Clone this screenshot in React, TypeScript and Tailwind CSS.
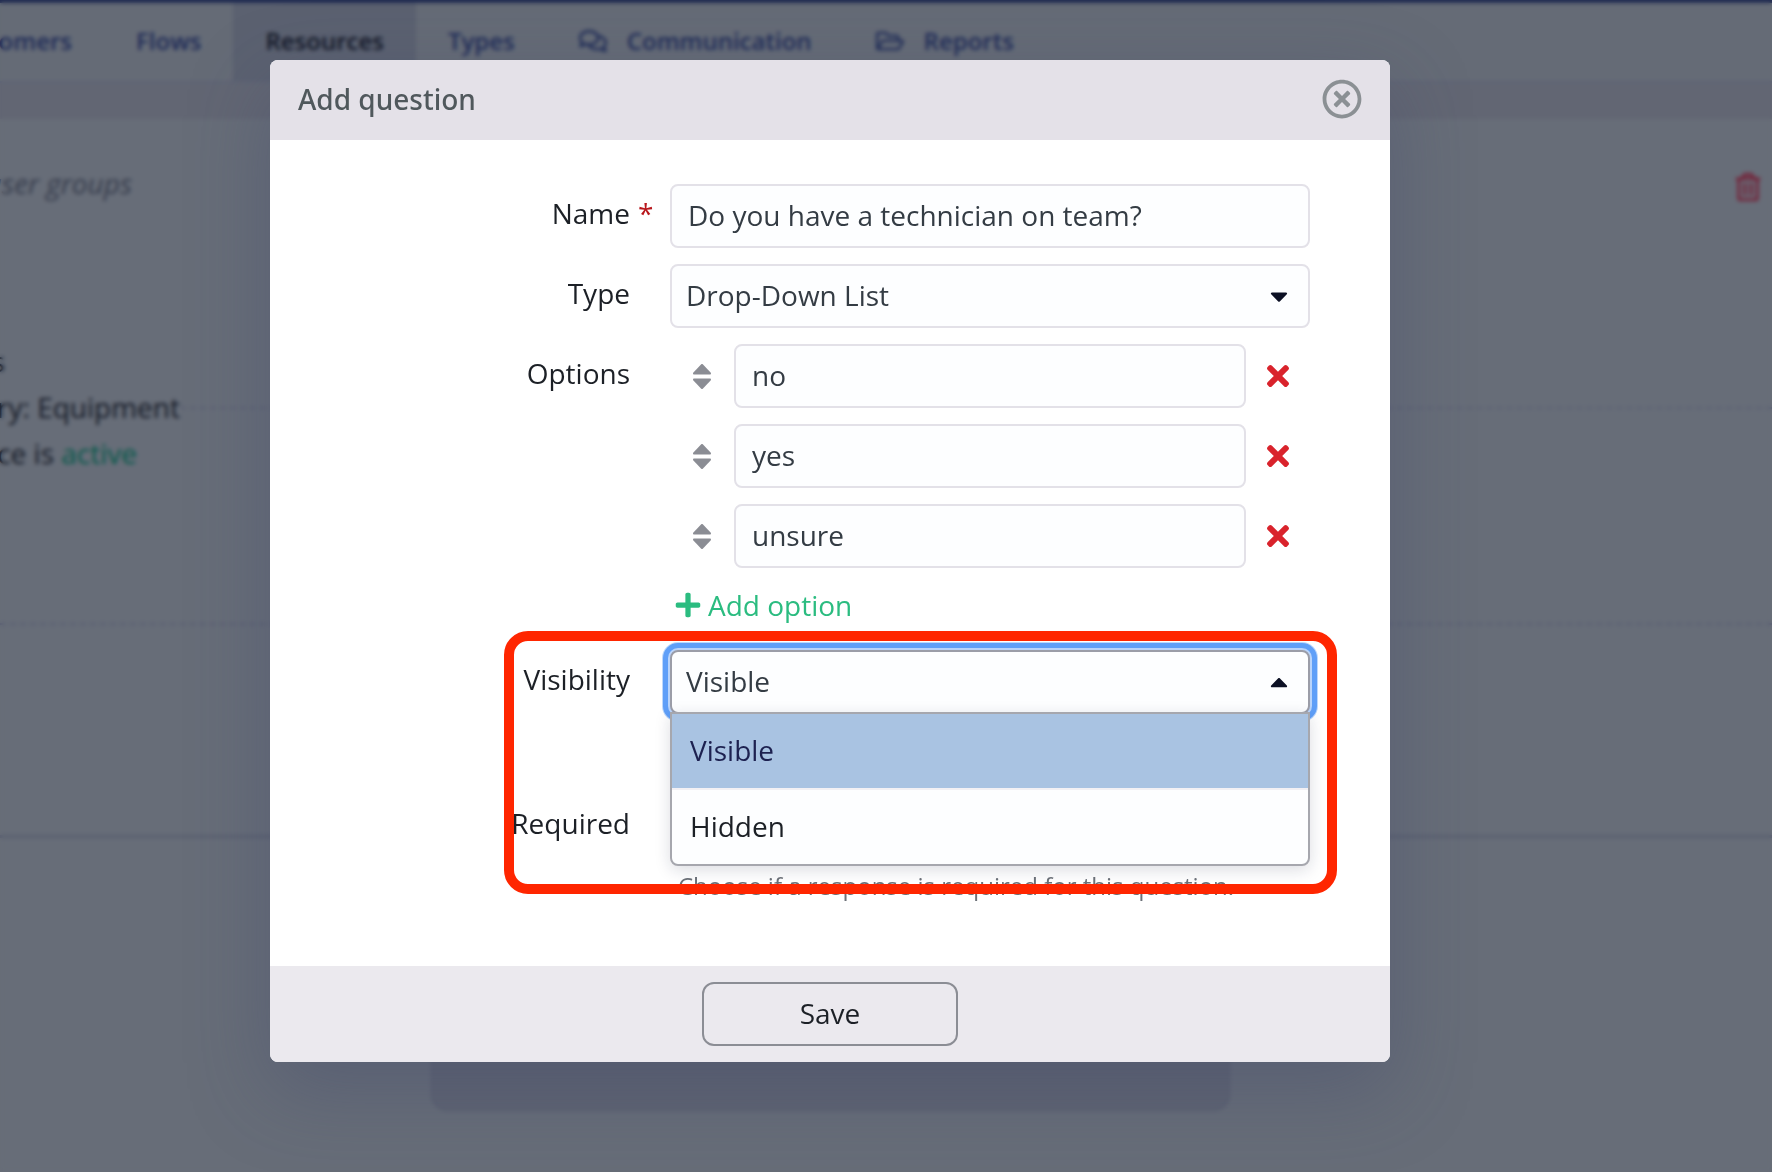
import React from "react";
import {
  FaCaretDown,
  FaCaretUp,
  FaPlus,
  FaRegComments,
  FaRegFolderOpen,
  FaRegTimesCircle,
  FaRegTrashAlt,
  FaSort,
  FaTimes,
} from "react-icons/fa";

const fieldBox = "h-16 w-full rounded-lg border-2 border-[#e3e1e8] bg-[#fdfeff] pb-0.5 text-[28px] text-[#343c44] outline-none";

function NavItem({ label, icon, active }: { label: string; icon?: React.ReactNode; active?: boolean }) {
  return (
    <a
      href="#"
      className={
        active
          ? "flex h-full items-center gap-5 bg-[#5b6170] px-8 pb-0.5 text-[#0e1322]"
          : "flex h-full items-center gap-5 px-8 pb-0.5 text-[#1d2a56]"
      }
    >
      {icon}
      {label}
    </a>
  );
}

function Backdrop() {
  return (
    <div className="absolute inset-0 overflow-hidden bg-[#676d78] text-[28px] text-[#131825]">
      <div className="h-[3px] bg-[#1f2a50]" />
      <nav className="flex h-20 items-center border-b-2 border-[#5e6375] bg-[#656b76] text-[24px] font-semibold">
        <div className="flex h-full w-[104px] justify-end">
          <NavItem label="omers" />
        </div>
        <NavItem label="Flows" />
        <NavItem label="Resources" active />
        <NavItem label="Types" />
        <NavItem label="Communication" icon={<FaRegComments className="size-7" />} />
        <NavItem label="Reports" icon={<FaRegFolderOpen className="size-7" />} />
      </nav>
      <div className="h-9 bg-[#626673]" />
      <div className="flex h-[506px] border-b-2 border-dashed border-[#585d72]">
        <div className="flex w-[180px] shrink-0 flex-col items-end pt-[41px] leading-[46px] whitespace-nowrap">
          <p className="mr-12">
            <em className="text-[#363c4c]">user groups</em>
          </p>
          <p className="mt-[132px] mr-[175px]">s</p>
          <p>ry: Equipment</p>
          <p className="mr-[43px]">
            ce is <span className="text-[#06584a]">active</span>
          </p>
        </div>
        <div className="flex-1">
          <div className="flex h-[290px] justify-end border-b-2 border-dashed border-[#5b6073] pt-[54px] pr-2.5">
            <FaRegTrashAlt className="size-7 text-[#741b32]" />
          </div>
        </div>
      </div>
      <div className="h-[213px] border-b-3 border-[#5a5f70]" />
      <div className="ml-[431px] h-[273px] w-[799px] rounded-2xl border-2 border-[#5b6070] bg-[#5f6472]" />
    </div>
  );
}

function Row({ label, id, required, children }: { label: string; id: string; required?: boolean; children: React.ReactNode }) {
  return (
    <div className="flex">
      <label htmlFor={id} className="flex h-[58px] w-[360px] shrink-0 items-center justify-end text-[#1c2026]">
        {label}
      </label>
      <span className="flex h-[58px] w-10 shrink-0 items-center pl-2 text-[#b8161b]">{required ? "*" : ""}</span>
      <div className="min-w-0 flex-1">{children}</div>
    </div>
  );
}

function OptionRow({ id, value }: { id: string; value: string }) {
  return (
    <div className="flex items-center">
      <button type="button" aria-label={"Reorder " + value} className="flex w-16 justify-center text-[#8b8d94]">
        <svg viewBox="0 0 18 25" className="h-[25px] w-[18px]" fill="currentColor" aria-hidden="true">
          <path d="M8 .4a1.4 1.4 0 0 1 2 0l7.600 8.200c.8.900.3 2-.8 2H1.200c-1.100 0-1.600-1.100-.8-2z" />
          <path d="M8 24.600a1.400 1.400 0 0 0 2 0l7.600-8.200c.8-.900.3-2-.8-2H1.200c-1.100 0-1.600 1.100-.8 2z" />
        </svg>
      </button>
      <input id={id} aria-label={"Option " + value} defaultValue={value} className={fieldBox + " min-w-0 flex-1 px-4"} />
      <button type="button" aria-label={"Remove " + value} className="flex w-16 justify-center text-[#d9232c]">
        <FaTimes className="size-8" />
      </button>
    </div>
  );
}

export default function App() {
  return (
    <div className="relative min-h-screen overflow-hidden font-['Open_Sans','Noto_Sans',sans-serif]">
      <Backdrop />
      <div className="absolute inset-0 backdrop-blur-[2px]" />

      <main className="relative pt-15 pr-[382px] pl-[270px]">
        <form
          role="dialog"
          aria-label="Add question"
          className="w-full rounded-lg bg-white text-[28px] shadow-[0_28px_80px_rgba(60,68,105,0.35)]"
        >
          <header className="flex h-20 items-center justify-between rounded-t-lg bg-[#e4e1e8] px-7 pb-0.5 text-[#50585c]">
            <h1 className="font-['Noto_Sans',sans-serif] font-medium">Add question</h1>
            <button type="button" aria-label="Close" className="text-[#8b9094]">
              <FaRegTimesCircle className="size-10" />
            </button>
          </header>

          <div className="flex flex-col gap-4 pt-11 pr-20 pb-[62px]">
            <Row label="Name" id="name" required>
              <input id="name" defaultValue="Do you have a technician on team?" className={fieldBox + " px-4"} />
            </Row>

            <Row label="Type" id="type">
              <div className="relative">
                <select id="type" className={fieldBox + " appearance-none px-3.5"}>
                  <option>Drop-Down List</option>
                </select>
                <FaCaretDown className="pointer-events-none absolute top-[18px] right-[17px] size-7 text-[#0c1024]" />
              </div>
            </Row>

            <Row label="Options" id="option-1">
              <div className="flex flex-col gap-4">
                <OptionRow id="option-1" value="no" />
                <OptionRow id="option-2" value="yes" />
                <OptionRow id="option-3" value="unsure" />
              </div>
              <button type="button" className="mt-4 flex h-11 items-center gap-1.5 pb-0.5 pl-1 text-[#2bbc80]">
                <FaPlus className="size-7" />
                Add option
              </button>
            </Row>

            <div className="relative mt-1.5 flex flex-col gap-20">
              <Row label="Visibility" id="visibility">
                <div className="relative">
                  <select
                    id="visibility"
                    className="h-16 w-full appearance-none rounded-lg border-2 border-[#9b9da8] bg-[#fdfeff] px-3.5 pb-0.5 text-[#343c44] shadow-[0_0_0_2px_#b9d4fb,0_0_0_7px_#5f9ff8,0_0_0_8px_#bdd8fc] outline-none"
                  >
                    <option>Visible</option>
                    <option>Hidden</option>
                  </select>
                  <FaCaretUp className="pointer-events-none absolute top-[18px] right-[17px] size-7 text-[#0c1024]" />
                  <ul
                    role="listbox"
                    aria-label="Visibility"
                    className="absolute inset-x-0 top-[62px] z-10 rounded-b-lg border-2 border-[#a6a7ae] bg-[#fdfeff] shadow-[0_4px_16px_rgba(20,30,60,0.15)]"
                  >
                    <li role="option" aria-selected="true" className="flex h-[76px] items-center border-b-2 border-[#f2f0f4] bg-[#a9c3e2] px-[18px] pb-[3px] text-[#1d2150]">
                      Visible
                    </li>
                    <li role="option" aria-selected="false" className="flex h-[74px] items-center px-[18px] pb-[3px] text-[#1c2026]">
                      Hidden
                    </li>
                  </ul>
                </div>
              </Row>

              <Row label="Required" id="required">
                <input id="required" type="checkbox" className="mt-4 ml-2 block size-7" />
                <p className="mt-[30px] pl-2 text-2xl leading-9 text-[#6c7178]">Choose if a response is required for this question.</p>
              </Row>

              <div className="pointer-events-none absolute -top-[19px] -right-[27px] left-[234px] z-20 h-[263px] rounded-3xl border-10 border-[#ff2600]" />
            </div>
          </div>

          <footer className="flex h-24 items-center justify-center rounded-b-lg bg-[#ebe9ee]">
            <button type="submit" className="h-16 w-64 rounded-xl border-2 border-[#8b8d94] pb-0.5 text-[#1c2026]">
              Save
            </button>
          </footer>
        </form>
      </main>
    </div>
  );
}
